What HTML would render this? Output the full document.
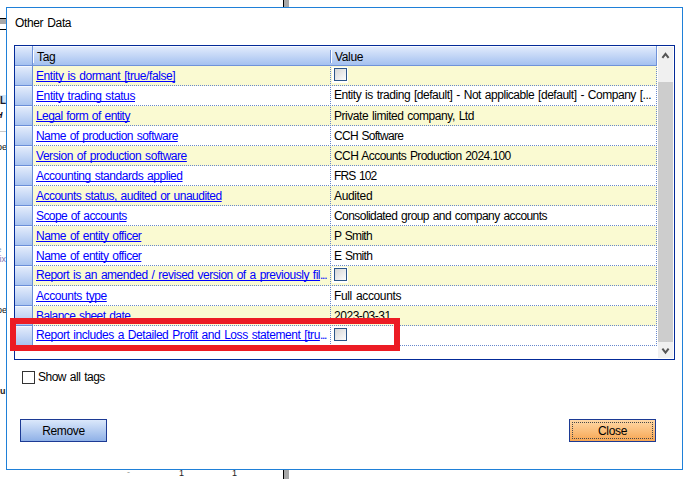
<!DOCTYPE html>
<html><head><meta charset="utf-8"><style>
*{margin:0;padding:0;box-sizing:border-box}
html,body{width:688px;height:479px;overflow:hidden;background:#fff;position:relative}
body{font-family:"Liberation Sans",sans-serif;font-size:12px;color:#000;letter-spacing:-0.35px;word-spacing:1px}
.a{position:absolute}
.dlg{position:absolute;left:6px;top:7px;width:677px;height:463px;border:1px solid #1f80d8;background:#fff}
.grid{position:absolute;left:14px;top:45px;width:661px;height:315px;border:1px solid #032a98;background:#fff;overflow:hidden}
.hdr{position:absolute;left:15px;top:46px;width:642px;height:20px;background:linear-gradient(#f6f9ff 0px,#f6f9ff 1px,#e0eafc 1px,#a4c1f0);border-bottom:1px solid #6f92d8}
.row{position:absolute;left:33px;width:624px;height:20px}
.rh{position:absolute;left:15px;width:18px;height:20px;background:linear-gradient(#f4f8ff 0px,#f4f8ff 1px,#e2ebfb 1px,#a9c4f0);border-right:1px solid #6a8ed8;border-bottom:1px solid #6a8ed8}
.dl{position:absolute;left:33px;width:624px;height:1px;background:repeating-linear-gradient(90deg,transparent 0 1px,#6787cc 1px 2px)}
.vdl{position:absolute;width:1px;background:repeating-linear-gradient(180deg,transparent 0 1px,#6787cc 1px 2px)}
.t{position:absolute;white-space:nowrap;line-height:14px;height:14px}
.tag{left:36px;color:#0000ff}
u{text-decoration:underline;text-decoration-skip-ink:none}
.ell{margin-left:0px;letter-spacing:-1.3px}
.val{left:334px}
.cbw{position:absolute;left:332px;width:16px;height:16px;background:#fff}
.cb{position:absolute;left:334px;width:13px;height:13px;border:1px solid #2a5588;background:linear-gradient(135deg,#d6d6d6,#fdfdfd)}
.sb{position:absolute;left:657px;top:46px;width:17px;height:313px;background:#f0f0f0;border:1px solid #fff}
.thumb{position:absolute;left:658px;top:82px;width:15px;height:260px;background:#cdcdcd}
.btn{position:absolute;top:419px;width:87px;height:23px;border:1px solid #1c3a94;text-align:center;line-height:23px}
.red{position:absolute;left:10px;top:318px;width:390px;height:33px;border:6px solid #ec1c24}
</style></head><body>
<!-- background -->
<div class="a" style="left:0;top:18px;width:6px;height:1px;background:#000"></div>
<div class="a" style="left:0;top:19px;width:6px;height:5px;background:#a8a8a8"></div>
<div class="a" style="left:0;top:29px;width:6px;height:1px;background:#000"></div>
<div class="a" style="left:283px;top:0;width:1px;height:7px;background:#000"></div>
<div class="a" style="left:284px;top:0;width:5px;height:7px;background:#a8a8a8"></div>
<div class="a" style="left:283px;top:470px;width:1px;height:9px;background:#000"></div>
<div class="a" style="left:284px;top:470px;width:5px;height:9px;background:#a8a8a8"></div>
<div class="a" style="left:0;top:95px;width:6px;height:9px;background:#cfe3f5"></div>
<div class="a" style="left:0;top:131px;width:6px;height:1px;background:#c8c8c8"></div>
<div class="a" style="left:0;top:0;width:6px;height:479px;overflow:hidden;letter-spacing:0">
 <div class="a" style="left:0px;top:95px;font-weight:bold;font-size:10px;line-height:12px;color:#1a1a2a">L</div>
 <div class="a" style="left:-4px;top:109px;font-weight:bold;font-style:italic;font-size:9px;line-height:12px;color:#101020">H</div>
 <div class="a" style="left:-3px;top:141px;font-size:9px;line-height:12px;color:#101010">oe</div>
 <div class="a" style="left:-3px;top:244px;font-size:8px;line-height:12px;color:#8090b0">e i</div>
 <div class="a" style="left:-3px;top:253px;font-size:9px;line-height:12px;color:#8070b0">fix</div>
 <div class="a" style="left:-3px;top:304px;font-size:9px;line-height:12px;color:#101010">oe</div>
 <div class="a" style="left:0px;top:385px;font-weight:bold;font-size:9px;line-height:12px;color:#202020">u</div>
</div>
<div class="a" style="left:127px;top:466px;font-size:9px;line-height:12px;color:#999;letter-spacing:0">-</div>
<div class="a" style="left:179px;top:467px;font-size:9px;line-height:12px;color:#222;letter-spacing:0">1</div>
<div class="a" style="left:232px;top:467px;font-size:9px;line-height:12px;color:#222;letter-spacing:0">1</div>

<div class="dlg"></div>
<div class="a" style="left:15px;top:16px;">Other Data</div>
<div class="grid"></div>
<div class="hdr"></div>
<div class="a" style="left:32px;top:46px;width:1px;height:19px;background:#6f92d8"></div>
<div class="a" style="left:33px;top:50px;width:1px;height:13px;background:#fff"></div>
<div class="a" style="left:330px;top:50px;width:1px;height:13px;background:#6f92d8"></div>
<div class="a" style="left:331px;top:50px;width:1px;height:13px;background:#fff"></div>
<div class="a" style="left:656px;top:46px;width:1px;height:20px;background:#6f92d8"></div>
<div class="rhh a" style="left:15px;top:46px;width:17px;height:19px;background:linear-gradient(#f6f9ff 0px,#f6f9ff 1px,#e0eafc 1px,#a4c1f0)"></div>
<div class="t" style="left:37px;top:50px">Tag</div>
<div class="t" style="left:335px;top:50px">Value</div>
<div class="row" style="top:66px;background:#fafad2"></div>
<div class="rh" style="top:66px"></div>
<div class="dl" style="top:85px"></div>
<div class="t tag" style="letter-spacing:-0.419px;top:69px"><u>Entity is dormant [true/false]</u></div>
<div class="cbw" style="top:67px"></div><div class="cb" style="top:68px"></div>
<div class="row" style="top:86px;background:#ffffff"></div>
<div class="rh" style="top:86px"></div>
<div class="dl" style="top:105px"></div>
<div class="t tag" style="letter-spacing:-0.400px;top:89px"><u>Entity trading status</u></div>
<div class="t val" style="letter-spacing:-0.468px;top:88px">Entity is trading [default] - Not applicable [default] - Company [...</div>
<div class="row" style="top:106px;background:#fafad2"></div>
<div class="rh" style="top:106px"></div>
<div class="dl" style="top:125px"></div>
<div class="t tag" style="letter-spacing:-0.561px;top:109px"><u>Legal form of entity</u></div>
<div class="t val" style="letter-spacing:-0.461px;top:109px">Private limited company, Ltd</div>
<div class="row" style="top:126px;background:#ffffff"></div>
<div class="rh" style="top:126px"></div>
<div class="dl" style="top:145px"></div>
<div class="t tag" style="letter-spacing:-0.542px;top:129px"><u>Name of production software</u></div>
<div class="t val" style="letter-spacing:-0.714px;top:129px">CCH Software</div>
<div class="row" style="top:146px;background:#fafad2"></div>
<div class="rh" style="top:146px"></div>
<div class="dl" style="top:165px"></div>
<div class="t tag" style="letter-spacing:-0.453px;top:149px"><u>Version of production software</u></div>
<div class="t val" style="letter-spacing:-0.576px;top:149px">CCH Accounts Production 2024.100</div>
<div class="row" style="top:166px;background:#ffffff"></div>
<div class="rh" style="top:166px"></div>
<div class="dl" style="top:185px"></div>
<div class="t tag" style="letter-spacing:-0.461px;top:169px"><u>Accounting standards applied</u></div>
<div class="t val" style="letter-spacing:-0.850px;top:169px">FRS 102</div>
<div class="row" style="top:186px;background:#fafad2"></div>
<div class="rh" style="top:186px"></div>
<div class="dl" style="top:205px"></div>
<div class="t tag" style="letter-spacing:-0.517px;top:189px"><u>Accounts status, audited or unaudited</u></div>
<div class="t val" style="letter-spacing:-0.350px;top:189px">Audited</div>
<div class="row" style="top:206px;background:#ffffff"></div>
<div class="rh" style="top:206px"></div>
<div class="dl" style="top:225px"></div>
<div class="t tag" style="letter-spacing:-0.600px;top:209px"><u>Scope of accounts</u></div>
<div class="t val" style="letter-spacing:-0.561px;top:209px">Consolidated group and company accounts</div>
<div class="row" style="top:226px;background:#fafad2"></div>
<div class="rh" style="top:226px"></div>
<div class="dl" style="top:245px"></div>
<div class="t tag" style="letter-spacing:-0.493px;top:229px"><u>Name of entity officer</u></div>
<div class="t val" style="letter-spacing:-0.683px;top:229px">P Smith</div>
<div class="row" style="top:246px;background:#ffffff"></div>
<div class="rh" style="top:246px"></div>
<div class="dl" style="top:265px"></div>
<div class="t tag" style="letter-spacing:-0.493px;top:249px"><u>Name of entity officer</u></div>
<div class="t val" style="letter-spacing:-0.683px;top:249px">E Smith</div>
<div class="row" style="top:266px;background:#fafad2"></div>
<div class="rh" style="top:266px"></div>
<div class="dl" style="top:285px"></div>
<div class="t tag" style="letter-spacing:-0.473px;top:268px"><u>Report is an amended / revised version of a previously fil</u><span class="ell">...</span></div>
<div class="cbw" style="top:267px"></div><div class="cb" style="top:268px"></div>
<div class="row" style="top:286px;background:#ffffff"></div>
<div class="rh" style="top:286px"></div>
<div class="dl" style="top:305px"></div>
<div class="t tag" style="letter-spacing:-0.433px;top:289px"><u>Accounts type</u></div>
<div class="t val" style="letter-spacing:-0.350px;top:289px">Full accounts</div>
<div class="row" style="top:306px;background:#fafad2"></div>
<div class="rh" style="top:306px"></div>
<div class="dl" style="top:325px"></div>
<div class="t tag" style="letter-spacing:-0.585px;top:309px"><u>Balance sheet date</u></div>
<div class="t val" style="letter-spacing:-0.461px;top:309px">2023-03-31</div>
<div class="row" style="top:326px;background:#ffffff"></div>
<div class="rh" style="top:326px"></div>
<div class="dl" style="top:345px"></div>
<div class="t tag" style="letter-spacing:-0.438px;top:328px"><u>Report includes a Detailed Profit and Loss statement [tru</u><span class="ell">...</span></div>
<div class="cbw" style="top:327px"></div><div class="cb" style="top:328px"></div>
<div class="vdl" style="left:330px;top:66px;height:280px"></div>
<div class="vdl" style="left:656px;top:66px;height:280px"></div>
<div class="sb"></div>
<div class="thumb"></div>
<svg class="a" style="left:657px;top:46px" width="17" height="17"><path d="M5.4 11.8 L8.5 7.8 L11.6 11.8" stroke="#555" stroke-width="2" fill="none"/></svg>
<svg class="a" style="left:657px;top:342px" width="17" height="17"><path d="M5.4 6.6 L8.5 10.6 L11.6 6.6" stroke="#555" stroke-width="2" fill="none"/></svg>
<div class="red"></div>

<div class="a" style="left:22px;top:371px;width:13px;height:13px;border:1px solid #333;background:#fff"></div>
<div class="t" style="left:38px;top:370px;letter-spacing:-0.5px">Show all tags</div>
<div class="btn" style="left:20px;background:linear-gradient(#dbe8fb,#8fb1e7)">Remove</div>
<div class="btn" style="left:569px;background:linear-gradient(#ffd8a6,#f6a653)"><div class="a" style="left:2px;top:2px;right:2px;bottom:2px;border:1px dotted #484848"></div>Close</div>
</body></html>
